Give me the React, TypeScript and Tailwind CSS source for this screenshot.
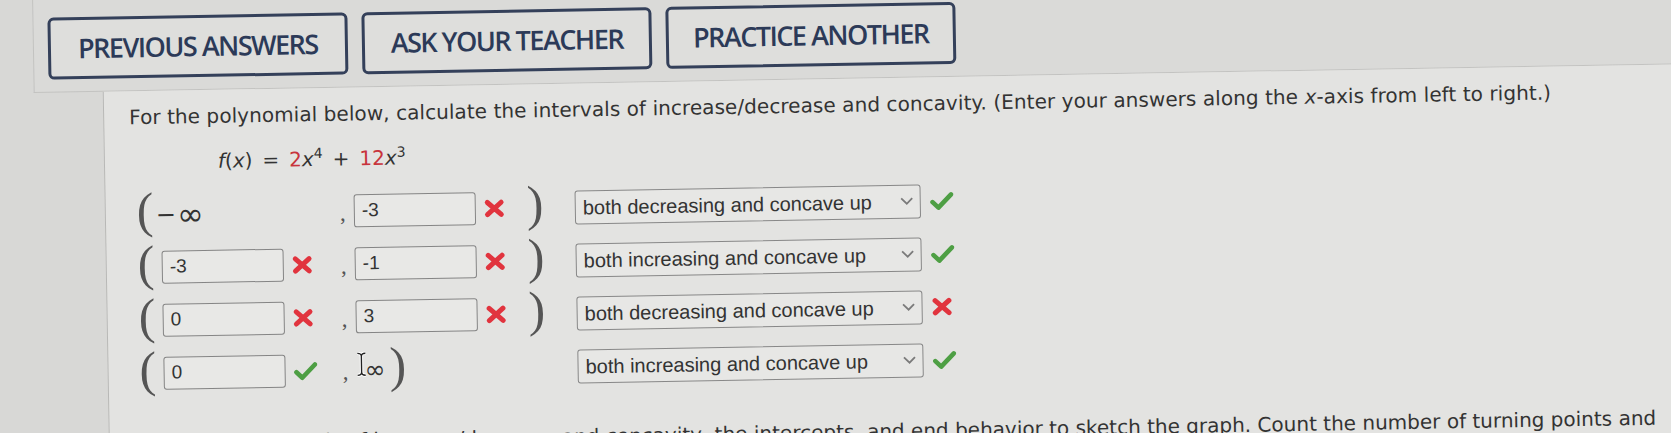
import React from "react";

const Check = () => (
  <svg width="24" height="20" viewBox="0 0 24 20" className="shrink-0">
    <path d="M2.8 10.8 L8.6 16.4 L21.4 3.4" fill="none" stroke="#4e9f44" strokeWidth="4.6" strokeLinecap="round" strokeLinejoin="round" />
  </svg>
);

const Cross = () => (
  <svg width="21" height="19" viewBox="0 0 21 19" className="shrink-0">
    <path d="M3.6 3.4 L17.4 15.6 M17.4 3.4 L3.6 15.6" fill="none" stroke="#e1343e" strokeWidth="5" strokeLinecap="round" />
  </svg>
);

const Chevron = () => (
  <svg width="14" height="9" viewBox="0 0 14 9" className="shrink-0">
    <path d="M1.5 1.5 L7 7 L12.5 1.5" fill="none" stroke="#7b7b7b" strokeWidth="1.8" />
  </svg>
);

const IBeam = () => (
  <svg width="12" height="26" viewBox="0 0 12 26" className="absolute left-[-9px] top-[-6px]">
    <path d="M2 2 Q6 2 6 5 Q6 2 10 2 M6 5 V21 M2 24 Q6 24 6 21 Q6 24 10 24" fill="none" stroke="#ffffff" strokeWidth="3.4" />
    <path d="M2 2 Q6 2 6 5 Q6 2 10 2 M6 5 V21 M2 24 Q6 24 6 21 Q6 24 10 24" fill="none" stroke="#222222" strokeWidth="1.4" />
  </svg>
);

const Icon = ({ kind }: { kind: "check" | "x" }) => (kind === "check" ? <Check /> : <Cross />);

const Field = ({ value }: { value: string }) => (
  <div className="w-[122px] h-[33px] border-[1.5px] border-[#858585] rounded-[3px] bg-[#e8e8e6] flex items-center pl-[7px] text-[19px] text-[#333] font-['Liberation_Sans',sans-serif] shrink-0">
    {value}
  </div>
);

const Paren = ({ ch }: { ch: string }) => (
  <span className="font-['Liberation_Serif',serif] text-[50px] leading-none text-[#555] pb-[10px] shrink-0">{ch}</span>
);

type Row = {
  a: string | null;
  aIcon: "check" | "x" | null;
  b: string | null;
  bIcon: "check" | "x" | null;
  sel: string;
  selIcon: "check" | "x";
};

const rows: Row[] = [
  { a: null, aIcon: null, b: "-3", bIcon: "x", sel: "both decreasing and concave up", selIcon: "check" },
  { a: "-3", aIcon: "x", b: "-1", bIcon: "x", sel: "both increasing and concave up", selIcon: "check" },
  { a: "0", aIcon: "x", b: "3", bIcon: "x", sel: "both decreasing and concave up", selIcon: "x" },
  { a: "0", aIcon: "check", b: null, bIcon: null, sel: "both increasing and concave up", selIcon: "check" },
];

export default function App() {
  return (
    <div className="w-[1671px] h-[433px] overflow-hidden bg-[#d8d8d6]">
      <div className="w-[1731px] h-[493px] -ml-[30px] -mt-[30px] -rotate-1 bg-[#d8d8d6] flex flex-col pl-[30px]">
        {/* top button panel */}
        <div className="ml-[36px] bg-[#dadad8] border-l border-b border-[#c3c3c1] pt-[34px] pb-[12px] pl-[14px] flex gap-[14px] font-['Open_Sans',sans-serif] text-[27px] font-semibold tracking-[-1.5px] text-[#2c3a58]">
          <div className="w-[300px] h-[62px] border-[3px] border-[#34405a] rounded-[6px] bg-[#dededc] flex items-center justify-center">PREVIOUS ANSWERS</div>
          <div className="w-[290px] h-[62px] border-[3px] border-[#34405a] rounded-[6px] bg-[#dededc] flex items-center justify-center">ASK YOUR TEACHER</div>
          <div className="w-[290px] h-[62px] border-[3px] border-[#34405a] rounded-[6px] bg-[#dededc] flex items-center justify-center">PRACTICE ANOTHER</div>
        </div>

        {/* question content */}
        <div className="ml-[105px] flex-1 border-l border-[#b8b8b6] bg-[#e3e3e1] pl-[25px] pt-[12px] flex flex-col text-[#333] font-['DejaVu_Sans',sans-serif]">
          <p className="text-[20px] leading-[28px] tracking-[0.07px] whitespace-nowrap">
            For the polynomial below, calculate the intervals of increase/decrease and concavity. (Enter your answers along the <i>x</i>-axis from left to right.)
          </p>
          <p className="mt-[17px] ml-[88px] text-[20px] leading-[28px] whitespace-nowrap">
            <i>f</i>(<i>x</i>)<span className="mx-[10px]">=</span>
            <span className="text-[#c8343c]">2</span><i>x</i>
            <sup className="text-[14px] -top-[8px]">4</sup>
            <span className="mx-[10px]">+</span>
            <span className="text-[#c8343c]">12</span><i>x</i>
            <sup className="text-[14px] -top-[8px]">3</sup>
          </p>

          <div className="mt-[12px] flex flex-col">
            {rows.map((r, i) => (
              <div key={i} className="h-[53px] flex items-center">
                <div className="w-[444px] flex items-center shrink-0">
                  <div className="ml-[6px] w-[22px] flex items-center">
                    <Paren ch="(" />
                  </div>
                  {r.a === null ? (
                    <div className="w-[181px] flex items-center leading-none text-[#333] -ml-[3px]">
                      <span className="text-[24px]">−</span>
                      <span className="text-[32px] ml-[1px]">∞</span>
                    </div>
                  ) : (
                    <div className="w-[181px] flex items-center">
                      <div className="ml-[2px]">
                        <Field value={r.a} />
                      </div>
                      <div className="ml-[8px] flex items-center">{r.aIcon && <Icon kind={r.aIcon} />}</div>
                    </div>
                  )}
                  <div className={`w-[14px] font-['Liberation_Serif',serif] text-[23px] text-[#555] leading-none pt-[3px] ${r.a === null ? "ml-[3px]" : ""}`}>,</div>
                  {r.b === null ? (
                    <>
                      <div className="relative ml-[8px] text-[25px] leading-none text-[#333]">
                        <IBeam />∞
                      </div>
                      <div className="ml-[4px] flex items-center">
                        <Paren ch=")" />
                      </div>
                    </>
                  ) : (
                    <>
                      <Field value={r.b} />
                      <div className="ml-[8px] w-[22px] flex items-center">{r.bIcon && <Icon kind={r.bIcon} />}</div>
                      <div className="ml-[21px] flex items-center">
                        <Paren ch=")" />
                      </div>
                    </>
                  )}
                </div>
                <div className="flex items-center">
                  <div className="w-[346px] h-[34px] border-[1.5px] border-[#888] rounded-[3px] bg-[#e7e7e5] flex items-center justify-between pl-[7px] pr-[6px] font-['Liberation_Sans',sans-serif] text-[20px] text-[#333]">
                    <span>{r.sel}</span>
                    <Chevron />
                  </div>
                  <div className="ml-[9px] flex items-center">
                    <Icon kind={r.selIcon} />
                  </div>
                </div>
              </div>
            ))}
          </div>

          <p className="mt-[30px] ml-[37px] text-[20px] leading-[28px] whitespace-nowrap">
            Use the intervals of increase/decrease and concavity, the intercepts, and end behavior to sketch the graph. Count the number of turning points and
          </p>
        </div>
      </div>
    </div>
  );
}
